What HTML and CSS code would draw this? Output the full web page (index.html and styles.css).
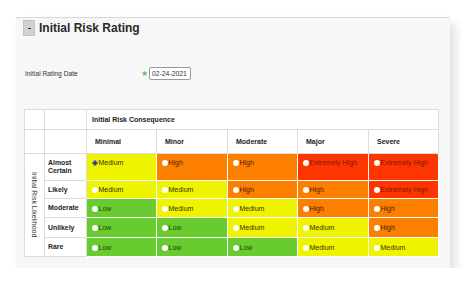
FILE: index.html
```html
<!DOCTYPE html>
<html>
<head>
<meta charset="utf-8">
<link rel="stylesheet" href="styles.css">
</head>
<body>
<div class="card">
  <div class="header">
    <span class="toggle"><span class="dash"></span></span>
    <span class="title">Initial Risk Rating</span>
  </div>
  <div class="daterow">
    <span class="label">Initial Rating Date</span>
    <span class="star">★</span>
    <span class="input">02-24-2021</span>
  </div>
  <table class="matrix">
    <colgroup>
      <col class="c1"><col class="c2"><col class="cc"><col class="cw"><col class="cc"><col class="cw"><col class="cc">
    </colgroup>
    <tr class="r-h1">
      <td class="blank"></td><td class="blank"></td>
      <th colspan="5" class="cons">Initial Risk Consequence</th>
    </tr>
    <tr class="r-h2">
      <td class="blank"></td><td class="blank"></td>
      <th class="colh">Minimal</th><th class="colh">Minor</th><th class="colh">Moderate</th><th class="colh">Major</th><th class="colh">Severe</th>
    </tr>
    <tr class="r-ac">
      <td rowspan="5" class="vert"><span>Initial Risk Likelihood</span></td>
      <th class="rowh">Almost<br>Certain</th>
      <td class="y"><span class="radio on"></span>Medium</td>
      <td class="o"><span class="radio"></span>High</td>
      <td class="o"><span class="radio"></span>High</td>
      <td class="r"><span class="radio"></span>Extremely High</td>
      <td class="r"><span class="radio"></span>Extremely High</td>
    </tr>
    <tr class="r-li">
      <th class="rowh">Likely</th>
      <td class="y"><span class="radio"></span>Medium</td>
      <td class="y"><span class="radio"></span>Medium</td>
      <td class="o"><span class="radio"></span>High</td>
      <td class="o"><span class="radio"></span>High</td>
      <td class="r"><span class="radio"></span>Extremely High</td>
    </tr>
    <tr class="r-mo">
      <th class="rowh">Moderate</th>
      <td class="g"><span class="radio"></span>Low</td>
      <td class="y"><span class="radio"></span>Medium</td>
      <td class="y"><span class="radio"></span>Medium</td>
      <td class="o"><span class="radio"></span>High</td>
      <td class="o"><span class="radio"></span>High</td>
    </tr>
    <tr class="r-un">
      <th class="rowh">Unlikely</th>
      <td class="g"><span class="radio"></span>Low</td>
      <td class="g"><span class="radio"></span>Low</td>
      <td class="y"><span class="radio"></span>Medium</td>
      <td class="y"><span class="radio"></span>Medium</td>
      <td class="o"><span class="radio"></span>High</td>
    </tr>
    <tr class="r-ra">
      <th class="rowh">Rare</th>
      <td class="g"><span class="radio"></span>Low</td>
      <td class="g"><span class="radio"></span>Low</td>
      <td class="g"><span class="radio"></span>Low</td>
      <td class="y"><span class="radio"></span>Medium</td>
      <td class="y"><span class="radio"></span>Medium</td>
    </tr>
  </table>
</div>
</body>
</html>
```

FILE: styles.css
```css
html, body {
  margin: 0;
  padding: 0;
  background: #ffffff;
}
body {
  font-family: "Liberation Sans", Arial, sans-serif;
  color: #222;
  padding-top: 17px;
}
.card {
  margin-left: 16px;
  width: 434px;
  height: 251px;
  background: #f7f7f7;
  border-top: 1px solid #d8d8d8;
  box-sizing: border-box;
  box-shadow: 5px 7px 10px rgba(0, 0, 0, 0.13);
}
.header {
  display: flex;
  align-items: center;
  gap: 4px;
  padding: 1px 7px;
  height: 18px;
}
.toggle {
  width: 12px;
  height: 16px;
  box-sizing: border-box;
  background: #d2d2d2;
  border: 1px solid #c2c2c2;
  display: flex;
  align-items: center;
  justify-content: center;
}
.dash {
  width: 3px;
  height: 1px;
  background: #333;
}
.title {
  font-size: 12px;
  font-weight: bold;
  color: #2a2a2a;
}
.daterow {
  display: flex;
  align-items: center;
  margin-top: 29px;
  padding-left: 9px;
  height: 13px;
}
.label {
  font-size: 6.7px;
  color: #333;
  width: 116px;
}
.star {
  color: #6dbb4c;
  font-size: 8px;
  width: 8px;
}
.input {
  width: 42px;
  height: 13px;
  box-sizing: border-box;
  border: 1px solid #9a9a9a;
  border-radius: 2px;
  background: #fff;
  font-size: 6.8px;
  line-height: 11px;
  padding-left: 2px;
  color: #333;
}
.matrix {
  margin-top: 29px;
  margin-left: 8px;
  width: 414px;
  table-layout: fixed;
  border-collapse: collapse;
  background: #fff;
}
.c1 { width: 20px; }
.c2 { width: 42px; }
.cc { width: 70px; }
.cw { width: 71px; }
.matrix td, .matrix th {
  border: 1px solid #dcdcdc;
  padding: 0;
  font-size: 7px;
  text-align: left;
  overflow: hidden;
  white-space: nowrap;
}
.r-h1 { height: 20px; }
.r-h2 { height: 24px; }
.r-ac { height: 27px; }
.r-li { height: 18px; }
.r-mo { height: 19px; }
.r-un { height: 20px; }
.r-ra { height: 19px; }
.cons {
  font-weight: bold;
  padding-left: 5px !important;
  vertical-align: middle;
  color: #222;
}
.colh {
  font-weight: bold;
  padding-left: 8px !important;
  vertical-align: middle;
  color: #222;
}
.rowh {
  font-weight: bold;
  padding-left: 3px !important;
  vertical-align: middle;
  line-height: 8px;
  color: #222;
  font-size: 6.9px !important;
}
.r-ac .rowh {
  vertical-align: top;
  padding-top: 5px !important;
}
.vert {
  text-align: center !important;
  vertical-align: middle;
}
.vert span {
  writing-mode: vertical-rl;
  font-size: 7px;
  color: #333;
  display: inline-block;
}
.matrix td.y, .matrix td.o, .matrix td.r, .matrix td.g {
  vertical-align: middle;
  padding-left: 5px;
  border-color: rgba(255, 255, 255, 0.28);
  color: #3a3300;
}
.r-ac td.y, .r-ac td.o, .r-ac td.r {
  vertical-align: top;
  padding-top: 5px;
}
.y { background: #eef300; }
.o { background: #fd7f00; color: #4a2000 !important; }
.r { background: #fd3500; color: #8a1300 !important; }
.g { background: #68cb30; color: #1f4a00 !important; }
.radio {
  display: inline-block;
  width: 6px;
  height: 6px;
  border-radius: 50%;
  background: #fff;
  vertical-align: -1px;
  box-sizing: border-box;
  margin-right: 0.5px;
}
.radio.on {
  border: 1px solid #8a8a8a;
  background: radial-gradient(circle, #3d3d5a 0 1.6px, #fff 1.8px);
}
```
